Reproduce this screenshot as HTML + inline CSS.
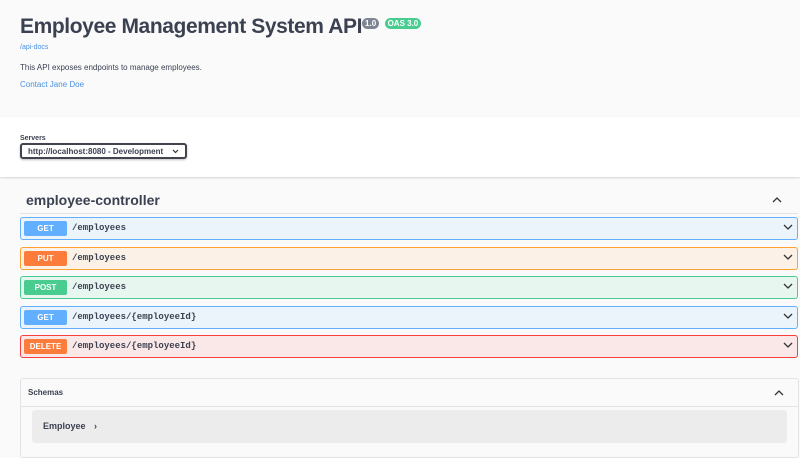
<!DOCTYPE html>
<html><head><style>
*{margin:0;padding:0;box-sizing:border-box}
body{width:800px;height:447px;overflow:hidden;background:#fafafa;font-family:"Liberation Sans",sans-serif;color:#3b4151;position:relative}
.abs{position:absolute}
.title{left:20px;top:15px;font-size:21px;letter-spacing:-0.4px;font-weight:bold;white-space:nowrap}
.badge{display:inline-block;font-size:8px;letter-spacing:0;color:#fff;border-radius:6px;padding:1px 3px;vertical-align:top;position:relative;top:3px;font-weight:bold}
.srv{left:0;top:117px;width:800px;height:60px;background:#fff;box-shadow:0 1px 2px rgba(0,0,0,.15)}
.op{position:absolute;left:20px;width:778px;height:23px;border:1px solid;border-radius:3px}
.m{position:absolute;left:3px;top:3px;width:43px;height:15px;border-radius:2px;color:#fff;font-size:8px;font-weight:bold;text-align:center;line-height:15px}
.p{position:absolute;left:51px;top:5px;font-family:"Liberation Mono",monospace;font-weight:bold;font-size:9px;color:#3b4151}
.chev{position:absolute;right:4px;top:6px}
</style></head><body>
<div class="abs title">Employee Management System API<span class="badge" style="background:#7d8492">1.0</span> <span class="badge" style="background:#49cc90">OAS 3.0</span></div>
<div class="abs" style="left:20px;top:44px;font-size:7px;color:#4990e2">/api-docs</div>
<div class="abs" style="left:20px;top:63px;font-size:8px">This API exposes endpoints to manage employees.</div>
<div class="abs" style="left:20px;top:80px;font-size:8px;color:#4990e2">Contact Jane Doe</div>
<div class="abs srv">
<div class="abs" style="left:20px;top:18px;font-size:7px;font-weight:bold">Servers</div>
<div class="abs" style="left:20px;top:26px;width:167px;height:16px;border:2px solid #41444e;border-radius:3px;box-shadow:0 1px 2px rgba(0,0,0,.25);font-size:8px;font-weight:bold;padding:2px 6px">http://localhost:8080 - Development<svg style="position:absolute;right:6px;top:4px" width="7" height="5" viewBox="0 0 7 5"><path d="M1 1l2.5 2.5L6 1" stroke="#333" fill="none" stroke-width="1.2"/></svg></div>
</div>
<div class="abs" style="left:26px;top:192px;font-size:14px;font-weight:bold">employee-controller</div>
<svg class="abs" style="left:772px;top:196px" width="10" height="7" viewBox="0 0 10 7"><path d="M1 6l4-4 4 4" stroke="#333" fill="none" stroke-width="1.3"/></svg>
<div class="abs" style="left:20px;top:213px;width:778px;height:1px;background:#e2e3e5"></div>

<div class="op" style="top:217px;background:#ebf3fb;border-color:#61affe"><div class="m" style="background:#61affe">GET</div><div class="p">/employees</div><svg class="chev" width="10" height="7" viewBox="0 0 10 7"><path d="M1 1l4 4 4-4" stroke="#333" fill="none" stroke-width="1.3"/></svg></div>
<div class="op" style="top:247px;background:#fbf1e6;border-color:#fca130"><div class="m" style="background:#fc7c3b">PUT</div><div class="p">/employees</div><svg class="chev" width="10" height="7" viewBox="0 0 10 7"><path d="M1 1l4 4 4-4" stroke="#333" fill="none" stroke-width="1.3"/></svg></div>
<div class="op" style="top:276px;background:#e8f6f0;border-color:#49cc90"><div class="m" style="background:#49cc90">POST</div><div class="p">/employees</div><svg class="chev" width="10" height="7" viewBox="0 0 10 7"><path d="M1 1l4 4 4-4" stroke="#333" fill="none" stroke-width="1.3"/></svg></div>
<div class="op" style="top:306px;background:#ebf3fb;border-color:#61affe"><div class="m" style="background:#61affe">GET</div><div class="p">/employees/{employeeId}</div><svg class="chev" width="10" height="7" viewBox="0 0 10 7"><path d="M1 1l4 4 4-4" stroke="#333" fill="none" stroke-width="1.3"/></svg></div>
<div class="op" style="top:335px;background:#fae7e7;border-color:#f93e3e"><div class="m" style="background:#fc7c3b">DELETE</div><div class="p">/employees/{employeeId}</div><svg class="chev" width="10" height="7" viewBox="0 0 10 7"><path d="M1 1l4 4 4-4" stroke="#333" fill="none" stroke-width="1.3"/></svg></div>

<div class="abs" style="left:20px;top:378px;width:779px;height:80px;border:1px solid #e2e3e5;border-radius:3px;background:#fafafa">
<div class="abs" style="left:7px;top:9px;font-size:8px;font-weight:bold">Schemas</div>
<svg class="abs" style="left:753px;top:10px" width="10" height="7" viewBox="0 0 10 7"><path d="M1 6l4-4 4 4" stroke="#333" fill="none" stroke-width="1.3"/></svg>
<div class="abs" style="left:0;top:27px;width:777px;height:1px;background:#e2e3e5"></div>
<div class="abs" style="left:11px;top:31px;width:755px;height:33px;background:#ececec;border-radius:3px">
<div class="abs" style="left:11px;top:11px;font-size:9px;font-weight:bold">Employee <span style="margin-left:6px">›</span></div></div>
</div>
</body></html>
